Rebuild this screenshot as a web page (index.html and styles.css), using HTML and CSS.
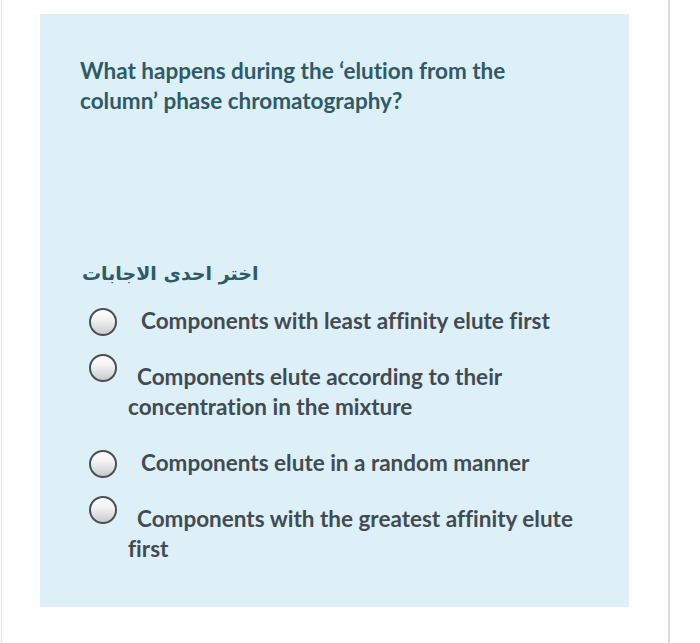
FILE: index.html
```html
<!DOCTYPE html>
<html lang="en">
<head>
<meta charset="utf-8">
<link rel="stylesheet" href="styles.css">
</head>
<body>
<div class="page">
  <div class="panel">
    <p class="question">What happens during the ‘elution from the column’ phase chromatography?</p>
    <p class="prompt" dir="rtl">اختر احدى الاجابات</p>
    <div class="options">
      <p class="option"><span class="radio"></span>Components with least affinity elute first</p>
      <p class="option raised"><span class="radio"></span>Components elute according to their concentration in the mixture</p>
      <p class="option"><span class="radio"></span>Components elute in a random manner</p>
      <p class="option raised"><span class="radio"></span>Components with the greatest affinity elute first</p>
    </div>
  </div>
</div>
</body>
</html>
```

FILE: styles.css
```css
html, body {
  margin: 0;
  padding: 0;
  background: #ffffff;
}
.page {
  box-sizing: border-box;
  margin-left: 1px;
  width: 669px;
  height: 643px;
  border-left: 1px solid #e4e4e4;
  border-right: 2px solid #dcdcdc;
  padding: 14px 0 0 38px;
}
.panel {
  box-sizing: border-box;
  width: 589px;
  height: 593px;
  background: #ddf0f8;
  padding: 42px 40px 0 40px;
  font-family: Lato, "DejaVu Sans", sans-serif;
  font-variant-ligatures: none;
}
.question {
  margin: 0;
  font-size: 22.5px;
  line-height: 30px;
  font-weight: 700;
  color: #2f5a67;
  width: 470px;
}
.prompt {
  margin: 142px 0 0 0;
  font-family: "DejaVu Sans", sans-serif;
  font-size: 19px;
  line-height: 30px;
  font-weight: 700;
  color: #2f5a67;
  padding-left: 2px;
  width: fit-content;
  white-space: nowrap;
}
.options {
  display: flex;
  flex-direction: column;
  gap: 26px;
  margin-top: 18px;
  padding-left: 48px;
}
.option {
  margin: 0;
  font-size: 22.5px;
  line-height: 30px;
  font-weight: 700;
  color: #434b52;
  text-indent: -39px;
  width: 455px;
}
.radio {
  display: inline-block;
  box-sizing: border-box;
  width: 28px;
  height: 28px;
  border: 2px solid #4b4f53;
  border-radius: 50%;
  background: linear-gradient(#ffffff, #f2f2f2 40%, #c9cbcd);
  vertical-align: -7px;
  margin-right: 24px;
  text-indent: 0;
}
.raised .radio {
  transform: translateY(-10px);
  margin-right: 20px;
}
```
